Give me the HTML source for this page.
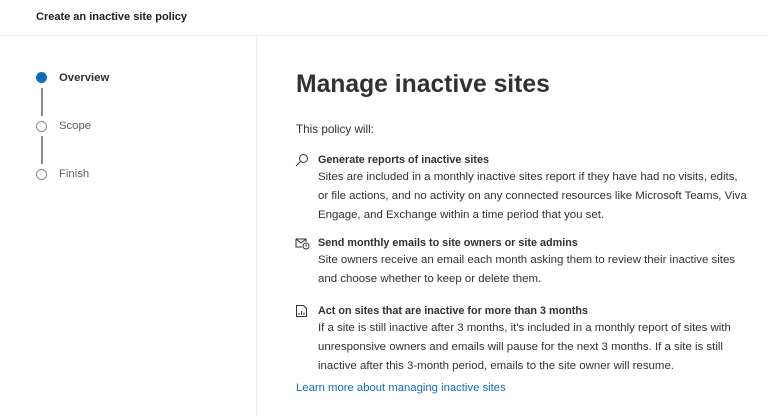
<!DOCTYPE html>
<html><head><style>
body{margin:0;width:768px;height:416px;background:#fff;font-family:"Liberation Sans",sans-serif;color:#323130;position:relative;overflow:hidden}
.hdr{position:absolute;left:0;top:0;width:768px;height:35px;border-bottom:1px solid #edebe9}
.hdr span{position:absolute;left:36px;top:11px;font-size:11px;font-weight:bold;color:#201f1e}
.vl{position:absolute;left:256px;top:36px;width:1px;height:380px;background:#edebe9}
.dot{position:absolute;left:36px;width:11px;height:11px;border-radius:50%;box-sizing:border-box;border:1.5px solid #8a8886}
.line{position:absolute;left:41px;width:1.5px;background:#8a8886}
.st{position:absolute;left:59px;font-size:11.3px;color:#605e5c}
h1{position:absolute;left:296px;top:71px;margin:0;font-size:24.7px;font-weight:bold;color:#323130}
.t{position:absolute;left:296px;font-size:11.7px}
.b{position:absolute;left:318px;font-size:10.8px;font-weight:bold;color:#323130}
.p{position:absolute;left:318px;white-space:nowrap;font-size:11.45px;line-height:19px;color:#323130}
.ic{position:absolute;left:295px}
a{position:absolute;left:296px;top:382px;font-size:11.3px;color:#0f6cbd;text-decoration:none}
</style></head><body>
<div class="hdr"><span>Create an inactive site policy</span></div>
<div class="vl"></div>
<div class="dot" style="top:72px;background:#0f6cbd;border-color:#0f6cbd"></div>
<div class="line" style="top:88px;height:28px"></div>
<div class="dot" style="top:121px"></div>
<div class="line" style="top:136px;height:28px"></div>
<div class="dot" style="top:169px"></div>
<div class="st" style="top:72px;font-weight:bold;color:#323130">Overview</div>
<div class="st" style="top:120px">Scope</div>
<div class="st" style="top:168px">Finish</div>
<h1>Manage inactive sites</h1>
<div class="t" style="top:123px">This policy will:</div>
<svg class="ic" style="top:153px" width="14" height="14" viewBox="0 0 14 14" fill="none" stroke="#323130" stroke-width="1"><circle cx="8.5" cy="5.5" r="4"/><path d="M5.5 8.5L1 13"/></svg>
<div class="b" style="top:154px">Generate reports of inactive sites</div>
<div class="p" style="top:168px">Sites are included in a monthly inactive sites report if they have had no visits, edits,<br>or file actions, and no activity on any connected resources like Microsoft Teams, Viva<br>Engage, and Exchange within a time period that you set.</div>
<svg class="ic" style="top:237px" width="15" height="13" viewBox="0 0 15 13" fill="none" stroke="#323130" stroke-width="1"><path d="M1 2h10v3M1 2v8h6M1 2l5 4 5-4"/><circle cx="11" cy="9" r="3"/><path d="M11 7.5V9h1"/></svg>
<div class="b" style="top:237px">Send monthly emails to site owners or site admins</div>
<div class="p" style="top:251px">Site owners receive an email each month asking them to review their inactive sites<br>and choose whether to keep or delete them.</div>
<svg class="ic" style="top:304px" width="13" height="14" viewBox="0 0 13 14" fill="none" stroke="#323130" stroke-width="1"><path d="M1.5 1.5h7l3 3v8h-10z"/><path d="M4 11V9M6.5 11V7M9 11V8.5" /></svg>
<div class="b" style="top:305px">Act on sites that are inactive for more than 3 months</div>
<div class="p" style="top:319px">If a site is still inactive after 3 months, it's included in a monthly report of sites with<br>unresponsive owners and emails will pause for the next 3 months. If a site is still<br>inactive after this 3-month period, emails to the site owner will resume.</div>
<a>Learn more about managing inactive sites</a>
</body></html>
